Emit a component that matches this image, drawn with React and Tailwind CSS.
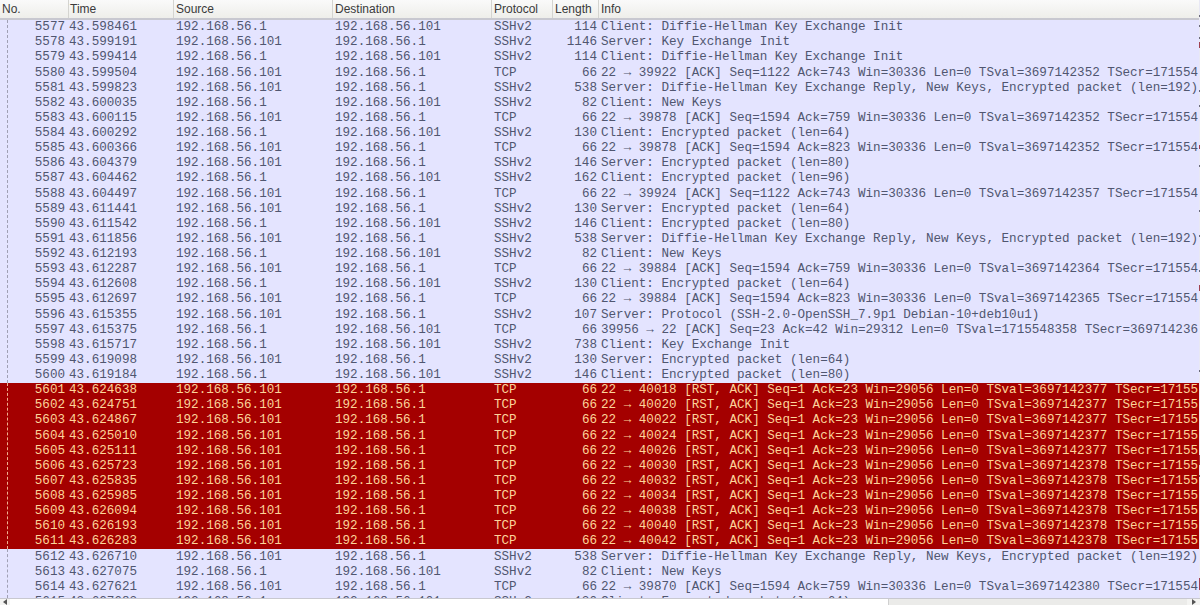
import React from "react";

const A = "192.168.56.1";
const B = "192.168.56.101";

const rows = [
  [5577, "43.598461", A, B, "SSHv2", 114, "Client: Diffie-Hellman Key Exchange Init"],
  [5578, "43.599191", B, A, "SSHv2", 1146, "Server: Key Exchange Init"],
  [5579, "43.599414", A, B, "SSHv2", 114, "Client: Diffie-Hellman Key Exchange Init"],
  [5580, "43.599504", B, A, "TCP", 66, "22 → 39922 [ACK] Seq=1122 Ack=743 Win=30336 Len=0 TSval=3697142352 TSecr=171554"],
  [5581, "43.599823", B, A, "SSHv2", 538, "Server: Diffie-Hellman Key Exchange Reply, New Keys, Encrypted packet (len=192)"],
  [5582, "43.600035", A, B, "SSHv2", 82, "Client: New Keys"],
  [5583, "43.600115", B, A, "TCP", 66, "22 → 39878 [ACK] Seq=1594 Ack=759 Win=30336 Len=0 TSval=3697142352 TSecr=171554"],
  [5584, "43.600292", A, B, "SSHv2", 130, "Client: Encrypted packet (len=64)"],
  [5585, "43.600366", B, A, "TCP", 66, "22 → 39878 [ACK] Seq=1594 Ack=823 Win=30336 Len=0 TSval=3697142352 TSecr=171554"],
  [5586, "43.604379", B, A, "SSHv2", 146, "Server: Encrypted packet (len=80)"],
  [5587, "43.604462", A, B, "SSHv2", 162, "Client: Encrypted packet (len=96)"],
  [5588, "43.604497", B, A, "TCP", 66, "22 → 39924 [ACK] Seq=1122 Ack=743 Win=30336 Len=0 TSval=3697142357 TSecr=171554"],
  [5589, "43.611441", B, A, "SSHv2", 130, "Server: Encrypted packet (len=64)"],
  [5590, "43.611542", A, B, "SSHv2", 146, "Client: Encrypted packet (len=80)"],
  [5591, "43.611856", B, A, "SSHv2", 538, "Server: Diffie-Hellman Key Exchange Reply, New Keys, Encrypted packet (len=192)"],
  [5592, "43.612193", A, B, "SSHv2", 82, "Client: New Keys"],
  [5593, "43.612287", B, A, "TCP", 66, "22 → 39884 [ACK] Seq=1594 Ack=759 Win=30336 Len=0 TSval=3697142364 TSecr=171554"],
  [5594, "43.612608", A, B, "SSHv2", 130, "Client: Encrypted packet (len=64)"],
  [5595, "43.612697", B, A, "TCP", 66, "22 → 39884 [ACK] Seq=1594 Ack=823 Win=30336 Len=0 TSval=3697142365 TSecr=171554"],
  [5596, "43.615355", B, A, "SSHv2", 107, "Server: Protocol (SSH-2.0-OpenSSH_7.9p1 Debian-10+deb10u1)"],
  [5597, "43.615375", A, B, "TCP", 66, "39956 → 22 [ACK] Seq=23 Ack=42 Win=29312 Len=0 TSval=1715548358 TSecr=369714236"],
  [5598, "43.615717", A, B, "SSHv2", 738, "Client: Key Exchange Init"],
  [5599, "43.619098", B, A, "SSHv2", 130, "Server: Encrypted packet (len=64)"],
  [5600, "43.619184", A, B, "SSHv2", 146, "Client: Encrypted packet (len=80)"],
  [5601, "43.624638", B, A, "TCP", 66, "22 → 40018 [RST, ACK] Seq=1 Ack=23 Win=29056 Len=0 TSval=3697142377 TSecr=17155", true],
  [5602, "43.624751", B, A, "TCP", 66, "22 → 40020 [RST, ACK] Seq=1 Ack=23 Win=29056 Len=0 TSval=3697142377 TSecr=17155", true],
  [5603, "43.624867", B, A, "TCP", 66, "22 → 40022 [RST, ACK] Seq=1 Ack=23 Win=29056 Len=0 TSval=3697142377 TSecr=17155", true],
  [5604, "43.625010", B, A, "TCP", 66, "22 → 40024 [RST, ACK] Seq=1 Ack=23 Win=29056 Len=0 TSval=3697142377 TSecr=17155", true],
  [5605, "43.625111", B, A, "TCP", 66, "22 → 40026 [RST, ACK] Seq=1 Ack=23 Win=29056 Len=0 TSval=3697142377 TSecr=17155", true],
  [5606, "43.625723", B, A, "TCP", 66, "22 → 40030 [RST, ACK] Seq=1 Ack=23 Win=29056 Len=0 TSval=3697142378 TSecr=17155", true],
  [5607, "43.625835", B, A, "TCP", 66, "22 → 40032 [RST, ACK] Seq=1 Ack=23 Win=29056 Len=0 TSval=3697142378 TSecr=17155", true],
  [5608, "43.625985", B, A, "TCP", 66, "22 → 40034 [RST, ACK] Seq=1 Ack=23 Win=29056 Len=0 TSval=3697142378 TSecr=17155", true],
  [5609, "43.626094", B, A, "TCP", 66, "22 → 40038 [RST, ACK] Seq=1 Ack=23 Win=29056 Len=0 TSval=3697142378 TSecr=17155", true],
  [5610, "43.626193", B, A, "TCP", 66, "22 → 40040 [RST, ACK] Seq=1 Ack=23 Win=29056 Len=0 TSval=3697142378 TSecr=17155", true],
  [5611, "43.626283", B, A, "TCP", 66, "22 → 40042 [RST, ACK] Seq=1 Ack=23 Win=29056 Len=0 TSval=3697142378 TSecr=17155", true],
  [5612, "43.626710", B, A, "SSHv2", 538, "Server: Diffie-Hellman Key Exchange Reply, New Keys, Encrypted packet (len=192)"],
  [5613, "43.627075", A, B, "SSHv2", 82, "Client: New Keys"],
  [5614, "43.627621", B, A, "TCP", 66, "22 → 39870 [ACK] Seq=1594 Ack=759 Win=30336 Len=0 TSval=3697142380 TSecr=171554"],
  [5615, "43.627683", A, B, "SSHv2", 130, "Client: Encrypted packet (len=64)"],
];

// ticks of the packet map at the right edge: [top, height, colour]
const mapTicks = [
  [15, 2, "#6a6a7a"],
  [25, 2, "#6a6a7a"],
  [37, 2, "#6a6a7a"],
  [42, 6, "#a04050"],
  [90, 2, "#6a6a7a"],
  [105, 2, "#6a6a7a"],
  [145, 4, "#a04050"],
  [165, 2, "#6a6a7a"],
  [210, 2, "#6a6a7a"],
  [235, 2, "#6a6a7a"],
  [270, 2, "#6a6a7a"],
  [285, 6, "#a04050"],
  [370, 2, "#6a6a7a"],
  [455, 10, "#a04050"],
  [475, 2, "#6a6a7a"],
  [578, 12, "#a04050"],
];

function HeaderCell({ className, children }) {
  return (
    <div className={`h-full shrink-0 pl-[2px] border-r border-[#d4d4d0] leading-[18px] ${className}`}>
      {children}
    </div>
  );
}

function PacketRow({ row }) {
  const [no, time, src, dst, proto, len, info, rst] = row;
  return (
    <div
      className={`flex h-[15.135px] shrink-0 items-center whitespace-pre ${
        rst ? "bg-[#a40000] text-[#fcd49a]" : "bg-[#e4e4ff] text-[#505670]"
      }`}
    >
      <div className="w-[67px] shrink-0 text-right pr-[2px]">{no}</div>
      <div className="w-[107px] shrink-0 pl-[2px]">{time}</div>
      <div className="w-[159px] shrink-0 pl-[2px]">{src}</div>
      <div className="w-[159px] shrink-0 pl-[2px]">{dst}</div>
      <div className="w-[60px] shrink-0 pl-[2px]">{proto}</div>
      <div className="w-[46px] shrink-0 text-right pr-[1px]">{len}</div>
      <div className="pl-[3px] overflow-hidden">{info}</div>
    </div>
  );
}

export default function App() {
  return (
    <div className="relative flex h-[605px] w-[1200px] flex-col overflow-hidden bg-white">
      <div className="flex h-[20px] shrink-0 border-b-2 border-[#c8c8d0] bg-gradient-to-b from-[#fafafa] to-[#eeeeea] font-['Liberation_Sans',sans-serif] text-[12px] text-[#3a3a3a]">
        <HeaderCell className="w-[69px]">No.</HeaderCell>
        <HeaderCell className="w-[105px] !pl-[1px]">Time</HeaderCell>
        <HeaderCell className="w-[159px]">Source</HeaderCell>
        <HeaderCell className="w-[159px]">Destination</HeaderCell>
        <HeaderCell className="w-[61px]">Protocol</HeaderCell>
        <HeaderCell className="w-[46px]">Length</HeaderCell>
        <div className="h-full flex-1 pl-[2px] leading-[18px]">Info</div>
      </div>

      <div className="flex min-h-0 flex-1 flex-col overflow-hidden font-['Liberation_Mono',monospace] text-[12.6px]">
        {rows.map((row) => (
          <PacketRow key={row[0]} row={row} />
        ))}
      </div>

      {/* related packet marker, dashed line down the first column */}
      <div className="absolute left-[7px] top-[20px] h-[363px] border-l border-dashed border-[#a0a0b4]" />
      <div className="absolute left-[7px] top-[383px] h-[166px] border-l border-dashed border-[#f0b090]" />
      <div className="absolute left-[7px] top-[549px] h-[49px] border-l border-dashed border-[#a0a0b4]" />

      {/* packet map strip on the right edge */}
      <div className="absolute right-0 top-0 h-[598px] w-[1px] bg-[#e8e8f4]">
        {mapTicks.map(([top, height, color]) => (
          <div
            key={top}
            className="absolute left-0 w-full"
            style={{ top, height, backgroundColor: color }}
          />
        ))}
      </div>

      {/* horizontal scroll bar */}
      <div className="absolute bottom-0 left-0 flex h-[7px] w-full border-t border-[#c8c8d0] bg-[#f4f4f2]">
        <div className="flex h-full w-[10px] items-center justify-center">
          <div className="h-0 w-0 border-y-[3px] border-r-[4px] border-y-transparent border-r-[#555555]" />
        </div>
        <div className="h-full w-[879px] border-r border-[#d0d0d0] bg-white" />
        <div className="h-full w-[298px] bg-[#ebebe9]" />
        <div className="flex h-full flex-1 items-center justify-center">
          <div className="h-0 w-0 border-y-[3px] border-l-[4px] border-y-transparent border-l-[#555555]" />
        </div>
      </div>
    </div>
  );
}
